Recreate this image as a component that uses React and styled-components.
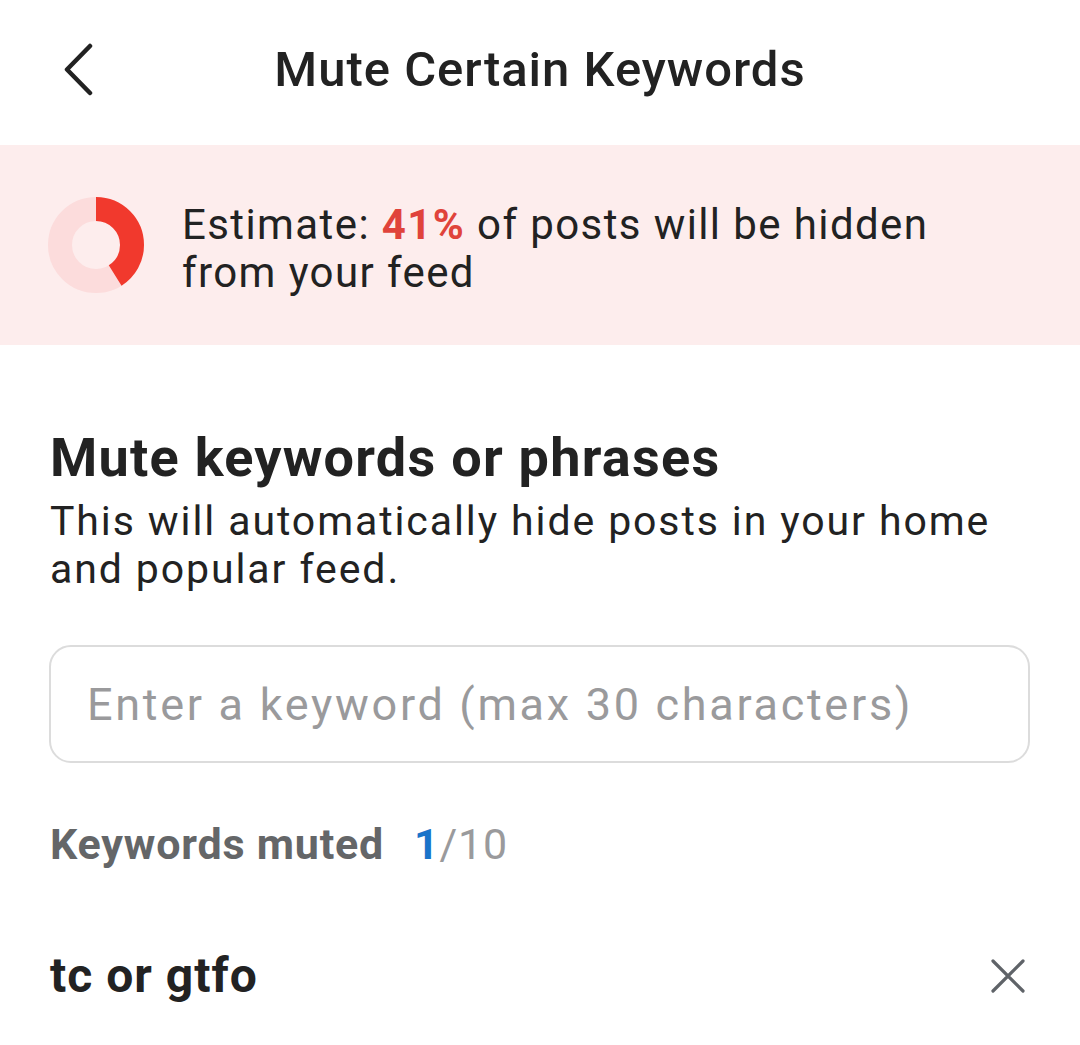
import React from "react";
import styled, { createGlobalStyle } from "styled-components";

const Global = createGlobalStyle`
  html, body {
    margin: 0;
    padding: 0;
    background: #ffffff;
    font-family: Roboto, "Liberation Sans", sans-serif;
    color: #222222;
  }
  * { box-sizing: border-box; }
`;

const Page = styled.div`
  width: 1080px;
  min-height: 1045px;
  background: #fff;
`;

const Header = styled.header`
  height: 145px;
  display: grid;
  grid-template-columns: 145px 1fr 145px;
  align-items: center;
  padding-bottom: 6px;
`;

const BackButton = styled.button`
  border: none;
  background: none;
  padding: 0;
  margin-left: 64px;
  width: 40px;
  height: 60px;
  display: flex;
  align-items: center;
  cursor: pointer;
`;

const Title = styled.h1`
  margin: 0;
  text-align: center;
  font-size: 49px;
  font-weight: 500;
  letter-spacing: 1px;
  color: #222;
`;

const Banner = styled.section`
  height: 200px;
  background: #fdeded;
  display: flex;
  align-items: center;
  padding: 0 48px;
  gap: 38px;
`;

const BannerText = styled.p`
  margin: 0;
  font-size: 42px;
  line-height: 48px;
  letter-spacing: 1.4px;
  color: #222;
  padding-top: 8px;
`;

const Percent = styled.span`
  color: #e0433b;
  font-weight: 700;
`;

const Content = styled.main`
  padding: 78px 50px 0 50px;
`;

const Heading = styled.h2`
  margin: 0;
  font-size: 54px;
  font-weight: 700;
  letter-spacing: 1.25px;
  line-height: 70px;
`;

const Subtitle = styled.p`
  margin: 4px 0 0 0;
  font-size: 41px;
  line-height: 48px;
  letter-spacing: 1.9px;
  color: #222;
`;

const KeywordInput = styled.input`
  display: block;
  width: 981px;
  margin: 52px 0 0 -1px;
  height: 118px;
  border: 2px solid #dcdcdc;
  border-radius: 22px;
  padding: 0 36px;
  font-family: inherit;
  font-size: 45px;
  letter-spacing: 2.7px;
  color: #222;
  outline: none;
  &::placeholder {
    color: #9a9a9c;
  }
`;

const CountRow = styled.div`
  margin-top: 56px;
  font-size: 43px;
  font-weight: 700;
  letter-spacing: 0.8px;
  color: #646668;
  display: flex;
  gap: 30px;
`;

const Count = styled.span`
  font-weight: 400;
  color: #9a9a9c;
`;

const CountValue = styled.span`
  font-weight: 700;
  color: #1a73c9;
`;

const KeywordRow = styled.div`
  margin-top: 78px;
  display: flex;
  align-items: center;
  justify-content: space-between;
`;

const Keyword = styled.span`
  font-size: 48px;
  font-weight: 700;
  letter-spacing: 1px;
  color: #222;
`;

const RemoveButton = styled.button`
  border: none;
  background: none;
  padding: 0;
  width: 40px;
  height: 40px;
  margin-right: 2px;
  display: flex;
  align-items: center;
  justify-content: center;
  cursor: pointer;
`;

const Donut = ({ value }) => {
  const r = 36;
  const c = 2 * Math.PI * r;
  return (
    <svg width="96" height="96" viewBox="0 0 96 96">
      <circle cx="48" cy="48" r={r} fill="none" stroke="#fcdcdc" strokeWidth="24" />
      <circle
        cx="48"
        cy="48"
        r={r}
        fill="none"
        stroke="#f1392d"
        strokeWidth="24"
        strokeDasharray={`${c * value} ${c}`}
        transform="rotate(-90 48 48)"
      />
    </svg>
  );
};

export default function App() {
  return (
    <Page>
      <Global />
      <Header>
        <BackButton aria-label="Back">
          <svg width="30" height="56" viewBox="0 0 30 56">
            <path d="M26 4 L3 27.5 L26 51" fill="none" stroke="#222" strokeWidth="4.5" strokeLinecap="round" strokeLinejoin="round" />
          </svg>
        </BackButton>
        <Title>Mute Certain Keywords</Title>
        <div />
      </Header>
      <Banner>
        <Donut value={0.41} />
        <BannerText>
          Estimate: <Percent>41%</Percent> of posts will be hidden
          <br />
          from your feed
        </BannerText>
      </Banner>
      <Content>
        <Heading>Mute keywords or phrases</Heading>
        <Subtitle>
          This will automatically hide posts in your home
          <br />
          and popular feed.
        </Subtitle>
        <KeywordInput placeholder="Enter a keyword (max 30 characters)" />
        <CountRow>
          <span>Keywords muted</span>
          <Count>
            <CountValue>1</CountValue>/10
          </Count>
        </CountRow>
        <KeywordRow>
          <Keyword>tc or gtfo</Keyword>
          <RemoveButton aria-label="Remove keyword">
            <svg width="36" height="36" viewBox="0 0 36 36">
              <path d="M3 3 L33 33 M33 3 L3 33" stroke="#5f6368" strokeWidth="3.2" strokeLinecap="round" />
            </svg>
          </RemoveButton>
        </KeywordRow>
      </Content>
    </Page>
  );
}
